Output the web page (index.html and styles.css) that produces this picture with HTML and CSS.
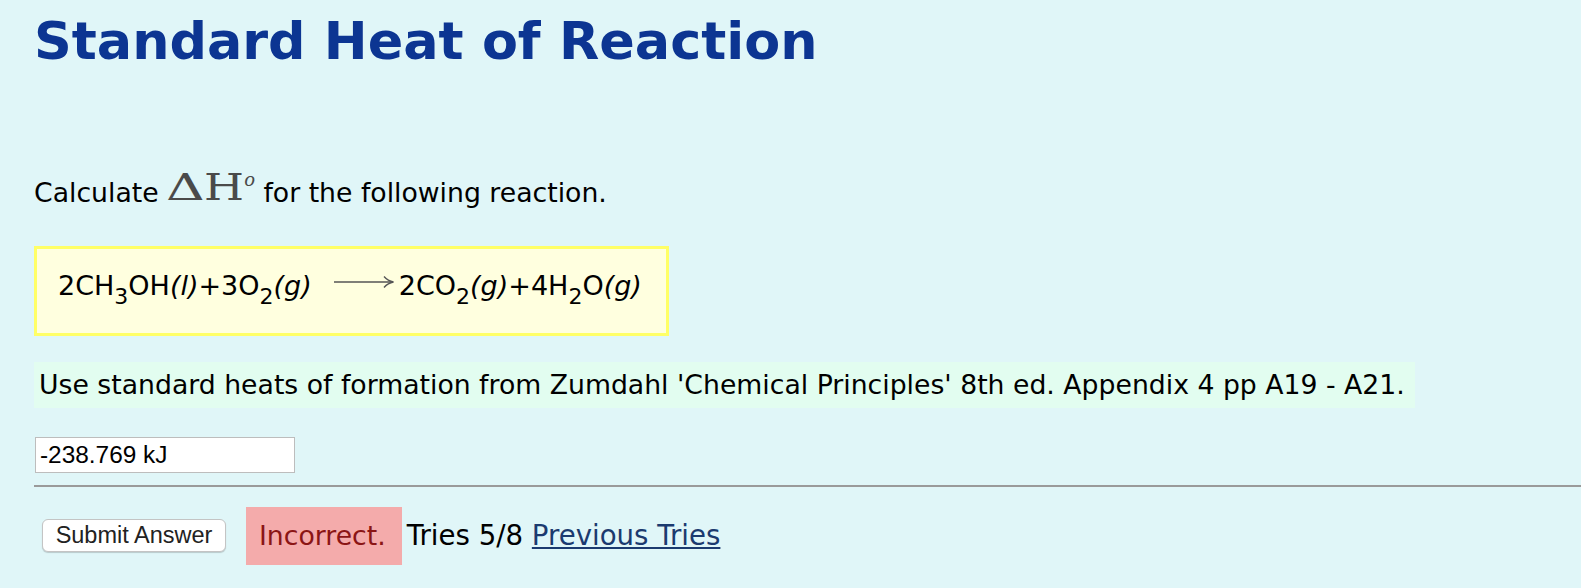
FILE: index.html
```html
<!DOCTYPE html>
<html>
<head>
<meta charset="utf-8">
<title>Standard Heat of Reaction</title>
<link rel="stylesheet" href="styles.css">
</head>
<body>
<h1 class="title">Standard Heat of Reaction</h1>
<p class="prompt">Calculate <span class="math"><span class="delta">Δ</span><span class="mh">H</span><sup class="deg">o</sup></span> for the following reaction.</p>
<div class="eq">2CH<sub class="sb">3</sub>OH<i class="st">(l)</i>+3O<sub class="sb">2</sub><i class="st">(g)</i><svg class="arrow" width="62" height="16" viewBox="0 0 62 16"><path d="M1 8 H59" stroke="#555" stroke-width="1.6" fill="none"/><path d="M51 2.5 Q55 7 60.5 8 Q55 9 51 13.5" stroke="#555" stroke-width="1.4" fill="none"/></svg>2CO<sub class="sb">2</sub><i class="st">(g)</i>+4H<sub class="sb">2</sub>O<i class="st">(g)</i></div>
<div class="note">Use standard heats of formation from Zumdahl 'Chemical Principles' 8th ed. Appendix 4 pp A19 - A21.</div>
<input class="answer" type="text" value="-238.769 kJ">
<hr class="rule">
<div class="row">
  <button class="submit" type="button">Submit Answer</button>
  <span class="verdict">Incorrect.</span>
  <span class="tries">Tries 5/8 <a class="prev" href="#">Previous Tries</a></span>
</div>
</body>
</html>
```
FILE: styles.css
```css
html, body {
  margin: 0;
  background: #e0f6f8;
}
body {
  padding: 0 0 0 34px;
  font-family: "DejaVu Sans", Verdana, sans-serif;
  font-size: 26.7px;
  line-height: 32px;
  color: #000;
}
.title {
  margin: 9px 0 0 0;
  font-family: "DejaVu Sans", Verdana, sans-serif;
  font-weight: bold;
  font-size: 52.4px;
  line-height: 64px;
  color: #0c3592;
}
.prompt {
  margin: 104px 0 0 0;
  line-height: 32px;
}
.math {
  font-family: "DejaVu Serif", "Liberation Serif", serif;
  font-size: 37px;
  line-height: 20px;
  color: #4a4a4a;
  margin-left: -1px;
  vertical-align: 2px;
}
.delta {
  display: inline-block;
  width: 38px;
  transform: scaleX(1.45);
  transform-origin: 0 50%;
}
.mh {
  display: inline-block;
  width: 39px;
  transform: scaleX(1.24);
  transform-origin: 0 50%;
}
.deg {
  font-size: 18px;
  font-style: italic;
  line-height: 0;
  vertical-align: 14px;
  margin-left: 1px;
}
.eq {
  width: fit-content;
  margin-top: 37px;
  border: 3px solid #ffff66;
  background: #ffffdf;
  padding: 21px 24px 31px 21px;
  font-size: 27px;
  line-height: 32px;
}
.sb {
  font-size: 22px;
  line-height: 0;
  vertical-align: -9px;
}
.st {
  font-style: italic;
}
.arrow {
  vertical-align: 5px;
  margin: 0 4px 0 21px;
}
.note {
  width: fit-content;
  margin-top: 26px;
  background: #e2fdf0;
  padding: 7px 10px 7px 5px;
  line-height: 32px;
}
.answer {
  display: block;
  box-sizing: border-box;
  width: 260px;
  height: 36px;
  margin: 29px 0 0 1px;
  padding: 0 4px;
  border: 1px solid #bdbdbd;
  background: #fff;
  font-family: "Liberation Sans", Arial, sans-serif;
  font-size: 24.4px;
  color: #000;
  outline: none;
}
.rule {
  border: 0;
  height: 2px;
  background: #9a9a9a;
  margin: 12px 0 0 0;
}
.row {
  display: flex;
  align-items: center;
  margin-top: 20px;
}
.submit {
  box-sizing: border-box;
  width: 184px;
  height: 33px;
  margin: 0 0 1px 8px;
  padding: 0;
  border: 1px solid #c4c4c4;
  border-radius: 6px;
  background: #fff;
  box-shadow: 0 1px 1px rgba(0, 0, 0, 0.18);
  font-family: "Liberation Sans", Arial, sans-serif;
  font-size: 23.5px;
  color: #222;
}
.verdict {
  margin-left: 20px;
  padding: 13px 16px 13px 13px;
  background: #f4abab;
  color: #8b1515;
  line-height: 32px;
}
.tries {
  margin-left: 5px;
  font-size: 27.6px;
  line-height: 32px;
}
.prev {
  color: #1b3a6f;
  text-decoration: underline;
}
```
